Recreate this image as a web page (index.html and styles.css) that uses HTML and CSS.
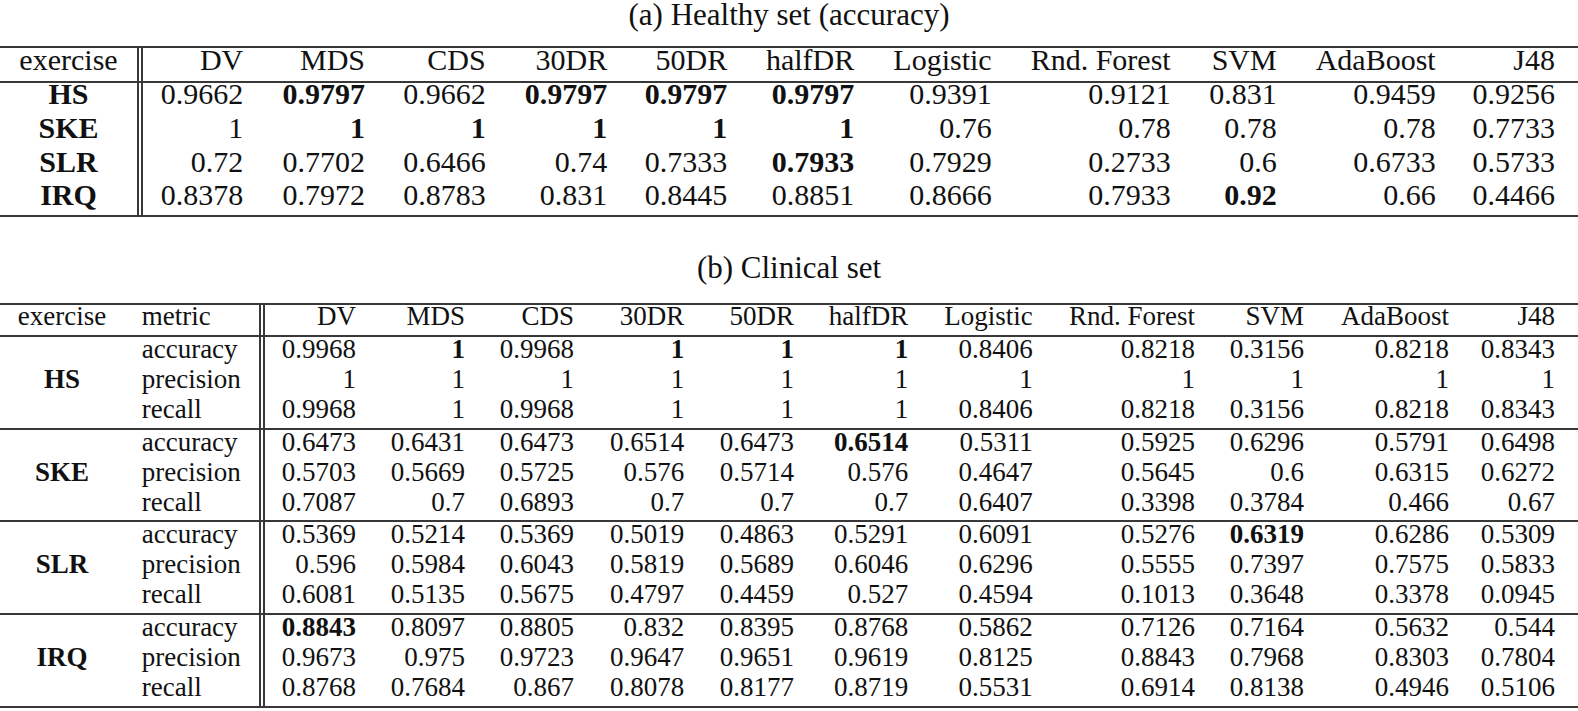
FILE: index.html
```html
<!DOCTYPE html>
<html>
<head>
<meta charset="utf-8">
<title>Results tables</title>
<link rel="stylesheet" href="styles.css">
</head>
<body>
<div class="page">
  <div class="caption caption-a">(a) Healthy set (accuracy)</div>
  <div class="tbl tbl-a">
    <div class="row-a head-a">
      <span class="c first">exercise</span><span class="c">DV</span><span class="c">MDS</span><span class="c">CDS</span><span class="c">30DR</span><span class="c">50DR</span><span class="c">halfDR</span><span class="c">Logistic</span><span class="c">Rnd. Forest</span><span class="c">SVM</span><span class="c">AdaBoost</span><span class="c">J48</span>
    </div>
    <div class="row-a body-a">
      <span class="c first b">HS</span><span class="c">0.9662</span><span class="c b">0.9797</span><span class="c">0.9662</span><span class="c b">0.9797</span><span class="c b">0.9797</span><span class="c b">0.9797</span><span class="c">0.9391</span><span class="c">0.9121</span><span class="c">0.831</span><span class="c">0.9459</span><span class="c">0.9256</span>
    </div>
    <div class="row-a body-a">
      <span class="c first b">SKE</span><span class="c">1</span><span class="c b">1</span><span class="c b">1</span><span class="c b">1</span><span class="c b">1</span><span class="c b">1</span><span class="c">0.76</span><span class="c">0.78</span><span class="c">0.78</span><span class="c">0.78</span><span class="c">0.7733</span>
    </div>
    <div class="row-a body-a">
      <span class="c first b">SLR</span><span class="c">0.72</span><span class="c">0.7702</span><span class="c">0.6466</span><span class="c">0.74</span><span class="c">0.7333</span><span class="c b">0.7933</span><span class="c">0.7929</span><span class="c">0.2733</span><span class="c">0.6</span><span class="c">0.6733</span><span class="c">0.5733</span>
    </div>
    <div class="row-a body-a last-a">
      <span class="c first b">IRQ</span><span class="c">0.8378</span><span class="c">0.7972</span><span class="c">0.8783</span><span class="c">0.831</span><span class="c">0.8445</span><span class="c">0.8851</span><span class="c">0.8666</span><span class="c">0.7933</span><span class="c b">0.92</span><span class="c">0.66</span><span class="c">0.4466</span>
    </div>
  </div>

  <div class="caption caption-b">(b) Clinical set</div>
  <div class="tbl tbl-b">
    <div class="head-b">
      <span class="ex-b ex-head">exercise</span>
      <div class="row-b">
        <span class="c metric">metric</span><span class="c">DV</span><span class="c">MDS</span><span class="c">CDS</span><span class="c">30DR</span><span class="c">50DR</span><span class="c">halfDR</span><span class="c">Logistic</span><span class="c">Rnd. Forest</span><span class="c">SVM</span><span class="c">AdaBoost</span><span class="c">J48</span>
      </div>
    </div>

    <div class="group">
      <span class="ex-b b">HS</span>
      <div class="rows-b">
        <div class="row-b body-b">
          <span class="c metric">accuracy</span><span class="c">0.9968</span><span class="c b">1</span><span class="c">0.9968</span><span class="c b">1</span><span class="c b">1</span><span class="c b">1</span><span class="c">0.8406</span><span class="c">0.8218</span><span class="c">0.3156</span><span class="c">0.8218</span><span class="c">0.8343</span>
        </div>
        <div class="row-b body-b">
          <span class="c metric">precision</span><span class="c">1</span><span class="c">1</span><span class="c">1</span><span class="c">1</span><span class="c">1</span><span class="c">1</span><span class="c">1</span><span class="c">1</span><span class="c">1</span><span class="c">1</span><span class="c">1</span>
        </div>
        <div class="row-b body-b last-b">
          <span class="c metric">recall</span><span class="c">0.9968</span><span class="c">1</span><span class="c">0.9968</span><span class="c">1</span><span class="c">1</span><span class="c">1</span><span class="c">0.8406</span><span class="c">0.8218</span><span class="c">0.3156</span><span class="c">0.8218</span><span class="c">0.8343</span>
        </div>
      </div>
    </div>

    <div class="group">
      <span class="ex-b b">SKE</span>
      <div class="rows-b">
        <div class="row-b body-b">
          <span class="c metric">accuracy</span><span class="c">0.6473</span><span class="c">0.6431</span><span class="c">0.6473</span><span class="c">0.6514</span><span class="c">0.6473</span><span class="c b">0.6514</span><span class="c">0.5311</span><span class="c">0.5925</span><span class="c">0.6296</span><span class="c">0.5791</span><span class="c">0.6498</span>
        </div>
        <div class="row-b body-b">
          <span class="c metric">precision</span><span class="c">0.5703</span><span class="c">0.5669</span><span class="c">0.5725</span><span class="c">0.576</span><span class="c">0.5714</span><span class="c">0.576</span><span class="c">0.4647</span><span class="c">0.5645</span><span class="c">0.6</span><span class="c">0.6315</span><span class="c">0.6272</span>
        </div>
        <div class="row-b body-b last-b">
          <span class="c metric">recall</span><span class="c">0.7087</span><span class="c">0.7</span><span class="c">0.6893</span><span class="c">0.7</span><span class="c">0.7</span><span class="c">0.7</span><span class="c">0.6407</span><span class="c">0.3398</span><span class="c">0.3784</span><span class="c">0.466</span><span class="c">0.67</span>
        </div>
      </div>
    </div>

    <div class="group">
      <span class="ex-b b">SLR</span>
      <div class="rows-b">
        <div class="row-b body-b">
          <span class="c metric">accuracy</span><span class="c">0.5369</span><span class="c">0.5214</span><span class="c">0.5369</span><span class="c">0.5019</span><span class="c">0.4863</span><span class="c">0.5291</span><span class="c">0.6091</span><span class="c">0.5276</span><span class="c b">0.6319</span><span class="c">0.6286</span><span class="c">0.5309</span>
        </div>
        <div class="row-b body-b">
          <span class="c metric">precision</span><span class="c">0.596</span><span class="c">0.5984</span><span class="c">0.6043</span><span class="c">0.5819</span><span class="c">0.5689</span><span class="c">0.6046</span><span class="c">0.6296</span><span class="c">0.5555</span><span class="c">0.7397</span><span class="c">0.7575</span><span class="c">0.5833</span>
        </div>
        <div class="row-b body-b last-b">
          <span class="c metric">recall</span><span class="c">0.6081</span><span class="c">0.5135</span><span class="c">0.5675</span><span class="c">0.4797</span><span class="c">0.4459</span><span class="c">0.527</span><span class="c">0.4594</span><span class="c">0.1013</span><span class="c">0.3648</span><span class="c">0.3378</span><span class="c">0.0945</span>
        </div>
      </div>
    </div>

    <div class="group">
      <span class="ex-b b">IRQ</span>
      <div class="rows-b">
        <div class="row-b body-b">
          <span class="c metric">accuracy</span><span class="c b">0.8843</span><span class="c">0.8097</span><span class="c">0.8805</span><span class="c">0.832</span><span class="c">0.8395</span><span class="c">0.8768</span><span class="c">0.5862</span><span class="c">0.7126</span><span class="c">0.7164</span><span class="c">0.5632</span><span class="c">0.544</span>
        </div>
        <div class="row-b body-b">
          <span class="c metric">precision</span><span class="c">0.9673</span><span class="c">0.975</span><span class="c">0.9723</span><span class="c">0.9647</span><span class="c">0.9651</span><span class="c">0.9619</span><span class="c">0.8125</span><span class="c">0.8843</span><span class="c">0.7968</span><span class="c">0.8303</span><span class="c">0.7804</span>
        </div>
        <div class="row-b body-b last-b">
          <span class="c metric">recall</span><span class="c">0.8768</span><span class="c">0.7684</span><span class="c">0.867</span><span class="c">0.8078</span><span class="c">0.8177</span><span class="c">0.8719</span><span class="c">0.5531</span><span class="c">0.6914</span><span class="c">0.8138</span><span class="c">0.4946</span><span class="c">0.5106</span>
        </div>
      </div>
    </div>
  </div>
</div>
</body>
</html>
```
FILE: styles.css
```css
html, body {
  margin: 0;
  padding: 0;
  background: #ffffff;
}

body {
  color: #111111;
  font-family: "Liberation Serif", "Times New Roman", serif;
}

.page {
  width: 1578px;
}

.caption {
  text-align: center;
  font-size: 31px;
  line-height: 29px;
  white-space: nowrap;
}

.caption-a {
  margin-bottom: 17px;
}

.caption-b {
  margin-top: 36.35px;
  margin-bottom: 21px;
}

.tbl {
  border-top: 2px solid #383838;
}

.c {
  display: block;
  white-space: nowrap;
  text-align: right;
}

.b {
  font-weight: bold;
}

/* ---------- table (a) ---------- */
.tbl-a {
  font-size: 30px;
  border-bottom: 2px solid #383838;
}

.row-a {
  display: grid;
  grid-template-columns: 143px 100.3px 121.7px 120.7px 121.6px 120px 127px 137.4px 179px 106px 159px 119.3px;
  padding-right: 23px;
}

.row-a .first {
  box-sizing: border-box;
  border-right: 6px double #383838;
  text-align: center;
}

.head-a {
  line-height: 24px;
  border-bottom: 2px solid #383838;
}

.head-a .c {
  padding-bottom: 9px;
}

.body-a {
  line-height: 22.4px;
}

.body-a .c {
  padding-bottom: 11.4px;
}

.last-a .c {
  padding-bottom: 8.2px;
}

/* ---------- table (b) ---------- */
.tbl-b {
  font-size: 27px;
}

.head-b {
  display: flex;
  line-height: 23.2px;
  border-bottom: 2px solid #383838;
}

.head-b .c,
.head-b .ex-head {
  padding-bottom: 6.5px;
}

.ex-b {
  flex: none;
  width: 124px;
  text-align: center;
  white-space: nowrap;
}

.group {
  display: flex;
  border-bottom: 2px solid #383838;
}

.group .ex-b {
  padding-top: 30px;
  line-height: 24.4px;
}

.rows-b {
  flex: none;
}

.row-b {
  display: grid;
  grid-template-columns: 141px 91px 109px 109px 110.3px 109.7px 114.3px 124.4px 162.3px 109px 145px 106px;
  padding-right: 23px;
}

.row-b .metric {
  box-sizing: border-box;
  border-right: 6px double #383838;
  padding-left: 17.7px;
  text-align: left;
}

.body-b {
  line-height: 24.4px;
}

.body-b .c {
  padding-bottom: 5.6px;
}

.last-b .c {
  padding-bottom: 6.3px;
}
```
